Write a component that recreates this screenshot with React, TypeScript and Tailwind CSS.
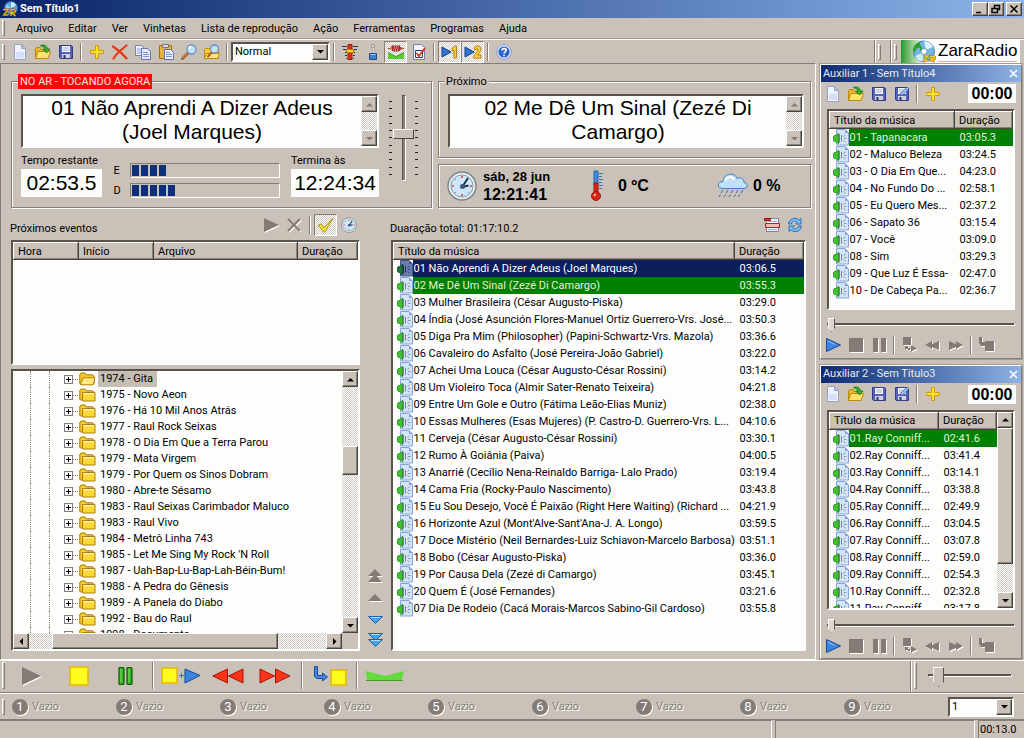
import React from "react";

type Track = { title: string; time: string };

const t = (title: string, time: string): Track => ({ title, time });

const PLAYLIST: Track[] = [
  t("01 Não Aprendi A Dizer Adeus (Joel Marques)", "03:06.5"),
  t("02 Me Dê Um Sinal (Zezé Di Camargo)", "03:55.3"),
  t("03 Mulher Brasileira (César Augusto-Piska)", "03:29.0"),
  t("04 Índia (José Asunción Flores-Manuel Ortiz Guerrero-Vrs. José...", "03:50.3"),
  t("05 Diga Pra Mim (Philosopher) (Papini-Schwartz-Vrs. Mazola)", "03:36.6"),
  t("06 Cavaleiro do Asfalto (José Pereira-João Gabriel)", "03:22.0"),
  t("07 Achei Uma Louca (César Augusto-César Rossini)", "03:14.2"),
  t("08 Um Violeiro Toca (Almir Sater-Renato Teixeira)", "04:21.8"),
  t("09 Entre Um Gole e Outro (Fátima Leão-Elias Muniz)", "02:38.0"),
  t("10 Essas Mulheres (Esas Mujeres) (P. Castro-D. Guerrero-Vrs. L...", "04:10.6"),
  t("11 Cerveja (César Augusto-César Rossini)", "03:30.1"),
  t("12 Rumo À Goiânia (Paiva)", "04:00.5"),
  t("13 Anarriê (Cecílio Nena-Reinaldo Barriga- Lalo Prado)", "03:19.4"),
  t("14 Cama Fria (Rocky-Paulo Nascimento)", "03:43.8"),
  t("15 Eu Sou Desejo, Você É Paixão (Right Here Waiting) (Richard ...", "04:21.9"),
  t("16 Horizonte Azul (Mont'Alve-Sant'Ana-J. A. Longo)", "03:59.5"),
  t("17 Doce Mistério (Neil Bernardes-Luiz Schiavon-Marcelo Barbosa)", "03:51.1"),
  t("18 Bobo (César Augusto-Piska)", "03:36.0"),
  t("19 Por Causa Dela (Zezé di Camargo)", "03:45.1"),
  t("20 Quem É (José Fernandes)", "03:21.6"),
  t("07 Dia De Rodeio (Cacá Morais-Marcos Sabino-Gil Cardoso)", "03:55.8"),
];

const AUX1: Track[] = [
  t("01 - Tapanacara", "03:05.3"),
  t("02 - Maluco Beleza", "03:24.5"),
  t("03 - O Dia Em Que...", "04:23.0"),
  t("04 - No Fundo Do ...", "02:58.1"),
  t("05 - Eu Quero Mes...", "02:37.2"),
  t("06 - Sapato 36", "03:15.4"),
  t("07 - Você", "03:09.0"),
  t("08 - Sim", "03:29.3"),
  t("09 - Que Luz É Essa-", "02:47.0"),
  t("10 - De Cabeça Pa...", "02:36.7"),
];

const AUX2: Track[] = [
  t("01.Ray Conniff...", "02:41.6"),
  t("02.Ray Conniff...", "03:41.4"),
  t("03.Ray Conniff...", "03:14.1"),
  t("04.Ray Conniff...", "03:38.8"),
  t("05.Ray Conniff...", "02:49.9"),
  t("06.Ray Conniff...", "03:04.5"),
  t("07.Ray Conniff...", "03:07.8"),
  t("08.Ray Conniff...", "02:59.0"),
  t("09.Ray Conniff...", "02:54.3"),
  t("10.Ray Conniff...", "02:32.8"),
  t("11.Ray Conniff...", "03:17.8"),
];

const FOLDERS = [
  "1974 - Gita",
  "1975 - Novo Aeon",
  "1976 - Há 10 Mil Anos Atrás",
  "1977 - Raul Rock Seixas",
  "1978 - O Dia Em Que a Terra Parou",
  "1979 - Mata Virgem",
  "1979 - Por Quem os Sinos Dobram",
  "1980 - Abre-te Sésamo",
  "1983 - Raul Seixas Carimbador Maluco",
  "1983 - Raul Vivo",
  "1984 - Metrô Linha 743",
  "1985 - Let Me Sing My Rock 'N Roll",
  "1987 - Uah-Bap-Lu-Bap-Lah-Béin-Bum!",
  "1988 - A Pedra do Gênesis",
  "1989 - A Panela do Diabo",
  "1992 - Bau do Raul",
  "1998 - Documento",
];

const MENUS = ["Arquivo", "Editar", "Ver", "Vinhetas", "Lista de reprodução", "Ação", "Ferramentas", "Programas", "Ajuda"];

const SUNKEN =
  "border-2 border-t-[#5a534c] border-l-[#5a534c] border-r-white border-b-white bg-[#fdfdfc]";
const RAISED =
  "border border-t-white border-l-white border-r-[#4a443e] border-b-[#4a443e] bg-[#cac2b9] shadow-[inset_-1px_-1px_0_#8a8279]";
const ETCHED = "border border-[#857d75] shadow-[1px_1px_0_#fff,inset_1px_1px_0_#fff]";
const DITHER = "bg-[repeating-conic-gradient(#fff_0_25%,#cfc8c0_0_50%)] bg-[length:2px_2px]";

/* ---------- icons ---------- */

type IconProps = { children: React.ReactNode; w?: number; h?: number };
const Svg = ({ children, w = 16, h = 16 }: IconProps) => (
  <svg width={w} height={h} viewBox={`0 0 ${w} ${h}`} className="block shrink-0" aria-hidden="true">
    {children}
  </svg>
);

const NewIcon = () => (
  <Svg>
    <path d="M2.5.5h7l4 4v11h-11z" fill="#eef3ff" stroke="#94a2cc" />
    <path d="M4 8h8v6H4z" fill="#d5e0f8" />
    <path d="M9.5.5v4h4z" fill="#b4c3ea" stroke="#94a2cc" />
  </Svg>
);

const OpenIcon = () => (
  <Svg>
    <path d="M.5 14.5v-10l1-1h4l1 2h6v3" fill="#e8b62c" stroke="#b88710" />
    <path d="M.5 14.5l2.500-7h12.500l-2.500 7z" fill="#ffe36b" stroke="#bd8b10" />
    <path d="M5.500 1.500c4-1.500 6.500.5 7 3.500h2.500L11.500 9 8 5.500h2c-.5-2-2-3-4.500-4z" fill="#3bb02a" stroke="#14720f" strokeWidth=".8" />
  </Svg>
);

const SaveIcon = ({ edit = false }: { edit?: boolean }) => (
  <Svg>
    <path d="M1.500 1.500h12l1 1v12h-12l-1-1z" fill="#5661b8" stroke="#343b86" />
    <path d="M4 2h8v6H4z" fill="#f4f4fb" />
    <path d="M5 4h6M5 6h6" stroke="#a9aed6" />
    <path d="M4 10h8v4H4z" fill="#cfd1e0" />
    <path d="M5.500 11h2v3h-2z" fill="#2c3170" />
    {edit && <path d="M6 9.500l1-2.500 6-6 1.800 1.800-6 6z" fill="#9fc4f2" stroke="#3c62a8" strokeWidth=".8" />}
  </Svg>
);

const PlusIcon = () => (
  <Svg>
    <path d="M6.500 1.500h3v5h5v3h-5v5h-3v-5h-5v-3h5z" fill="#ffe32a" stroke="#d19a08" />
  </Svg>
);

const DeleteIcon = () => (
  <Svg>
    <path d="M1 2.500C5 5 11 10 14.500 14.500M14.500 1.500C10 5 4 10 1.500 14.500" stroke="#e5391c" strokeWidth="2.200" fill="none" strokeLinecap="round" />
  </Svg>
);

const CopyIcon = () => (
  <Svg>
    <path d="M.5 1.500h6l2.500 2.500v7.500h-8.500z" fill="#eef2ff" stroke="#7480b8" />
    <path d="M2 5h5M2 7h5M2 9h4" stroke="#8fa0d8" />
    <path d="M6.500 4.500h6l3 3v8h-9z" fill="#e4ebff" stroke="#6673b0" />
    <path d="M8 8.500h5M8 10.500h6M8 12.500h6" stroke="#7d90d0" />
  </Svg>
);

const PasteIcon = () => (
  <Svg>
    <path d="M1.500 1.500h12v13h-12z" fill="#e5b43a" stroke="#9c7014" />
    <path d="M4.500.5h6v3h-6z" fill="#d8d8dd" stroke="#77777d" />
    <path d="M6.500 5.500h6l3 3v7h-9z" fill="#eef2ff" stroke="#6673b0" />
    <path d="M8 8.500h4M8 10.500h6M8 12.500h6" stroke="#7d90d0" />
  </Svg>
);

const SearchIcon = () => (
  <Svg>
    <path d="M1.500 14.500l5-5" stroke="#a85c24" strokeWidth="3" strokeLinecap="round" />
    <path d="M1.500 14l4.500-4.500" stroke="#e49b5a" strokeWidth="1" />
    <circle cx="10.500" cy="5.500" r="4.500" fill="#c3e4fb" stroke="#6b8fc0" strokeWidth="1.300" />
    <path d="M8 5a2.500 2.500 0 012.500-2.500" stroke="#fff" strokeWidth="1.300" fill="none" />
  </Svg>
);

const SearchFolderIcon = () => (
  <Svg>
    <path d="M.5 14.500v-9l1-1h4l1 1.500h8v8.500z" fill="#f6cc3e" stroke="#bd8b10" />
    <path d="M.5 14.500l2-5h13l-1.500 5z" fill="#ffe577" stroke="#bd8b10" />
    <path d="M4 12.500l3.500-4" stroke="#a85c24" strokeWidth="2" strokeLinecap="round" />
    <circle cx="10.500" cy="5" r="4" fill="#c3e4fb" stroke="#6b8fc0" strokeWidth="1.300" />
  </Svg>
);

const MixerIcon = () => (
  <Svg>
    <path d="M0 2.500h5M11 2.500h5M1 5.500h4M11 5.500h4M3 8.500h2M11 8.500h2M3 11.500h2M11 11.500h2M4 14.500h1M11 14.500h1" stroke="#333" />
    <path d="M6 .5h4v15H6z" fill="#d8341c" stroke="#8c1c08" />
    <path d="M4.500 5.500h7v3h-7z" fill="#ffd23a" stroke="#b87e08" />
  </Svg>
);

const MicIcon = () => (
  <Svg>
    <rect x="6.500" y=".5" width="3" height="3" rx="1" fill="#d8d8d8" stroke="#888" />
    <path d="M7.500 3.500h1.500v6H7.500z" fill="#f4f4f4" stroke="#999" strokeWidth=".7" />
    <path d="M4.500 9.500h7v6h-7z" fill="#3f7fd0" stroke="#1e4c92" />
    <path d="M5.500 10.500h5" stroke="#a4cdf8" />
  </Svg>
);

const FadeIcon = () => (
  <Svg w={18} h={16}>
    <path d="M1 4.500h2M15 4.500h2M4 6V3l1.500-1.500V7L7 1.500v6L9 1.500v6l2-6v6l1.500-6V7L14 3v3" stroke="#a8201a" strokeWidth=".9" fill="none" />
    <path d="M1 8.500l8 4 8-4V15H1z" fill="#56cc35" />
    <path d="M1 8.500l8 4 8-4" stroke="#3da022" fill="none" />
  </Svg>
);

const CheckDocIcon = () => (
  <Svg>
    <path d="M2.500.5h8l3 3v12h-11z" fill="#f2f5ff" stroke="#7480b8" />
    <path d="M4.500 6.500h7v7h-7z" fill="#fff" stroke="#333a70" />
    <path d="M5.500 9l2.500 3 6-8" stroke="#e02c1c" strokeWidth="1.800" fill="none" />
  </Svg>
);

const PlayNumIcon = ({ n }: { n: 1 | 2 }) => (
  <Svg w={18} h={16}>
    <path d="M1 3l9 5-9 5z" fill="#2e78d2" stroke="#123f88" />
    {n === 1 ? (
      <path d="M11 4.500l3-2.500h1.500v12h-2.500V6l-2 1z" fill="#ffd036" stroke="#b07c04" strokeWidth=".9" />
    ) : (
      <path d="M10 5.500C10 .5 17 .8 17 5c0 2.500-2.500 4-3.500 6H17v3h-7.500c0-4 4.500-6 4.500-8.500 0-1.300-1.600-1.300-1.600 0z" fill="#ffd036" stroke="#b07c04" strokeWidth=".9" />
    )}
  </Svg>
);

const HelpIcon = () => (
  <Svg>
    <circle cx="8" cy="8" r="7.300" fill="#dfe8fb" stroke="#8b9bd8" />
    <circle cx="8" cy="8" r="5.600" fill="#2e63cf" />
    <path d="M6 6.500C6 4 10.200 4 10.200 6.300 10.200 7.800 8 7.800 8 9.500M8 10.700v1.500" stroke="#fff" strokeWidth="1.600" fill="none" />
  </Svg>
);

const TrackIcon = ({ dark = false }: { dark?: boolean }) => (
  <Svg w={16} h={17}>
    <path d="M3.500.5h8.500l3.500 3.500v12h-12z" fill={dark ? "#6a7fb0" : "#d3e3f8"} stroke={dark ? "#3f5288" : "#88a4d4"} />
    <path d="M12 .5v3.500h3.500z" fill={dark ? "#3f5288" : "#7fa0d8"} />
    <path d="M10.500 7.500l2-1.500M11 9.500h2.500M10.500 11.500l2 1.500" stroke={dark ? "#2c3c6c" : "#8393a8"} />
    <path d="M6.500 5v8.500M8.500 6v6.500" stroke={dark ? "#203050" : "#77858c"} />
    <path d="M.5 7.500l1-1h1.500l2-2h.5v10H5l-2-2H1.500l-1-1z" fill={dark ? "#1f7038" : "#3fc22c"} stroke={dark ? "#0e4424" : "#1c8414"} strokeWidth=".8" />
  </Svg>
);

const FolderIcon = ({ open = false }: { open?: boolean }) => (
  <Svg w={17} h={14}>
    <path d="M.8 11.500V2.500L2 1h4l1.300 1.800h6.200L15 4v8H2z" fill="#f3c92e" stroke="#a97a0a" />
    {open ? (
      <path d="M1.500 12.800l2.500-7h12l-2 7z" fill="#ffec80" stroke="#b1820e" />
    ) : (
      <>
        <path d="M3.500 4.500h12.500v8.500H3.500z" fill="#ffd838" stroke="#b1820e" />
        <path d="M4.500 5.800h10.500" stroke="#fff3a6" strokeWidth="1.400" />
      </>
    )}
  </Svg>
);

const ClockIcon = ({ size = 16 }: { size?: number }) => (
  <svg width={size} height={size} viewBox="0 0 30 30" className="block shrink-0" aria-hidden="true">
    <circle cx="15" cy="15" r="14" fill="#e9edf0" stroke="#7d8890" strokeWidth="1.500" />
    <circle cx="15" cy="15" r="11" fill="#cde6fa" stroke="#8a9aaa" />
    <path d="M15 5v2M15 23v2M5 15h2M23 15h2" stroke="#d04428" strokeWidth="1.600" />
    <path d="M8 8l1 1M22 22l-1-1M8 22l1-1" stroke="#6a7c90" />
    <path d="M15.500 15.500L21 7M15.500 16l6-1.500" stroke="#1f3350" strokeWidth="2" />
    <circle cx="15.500" cy="15.500" r="2.500" fill="#35557c" />
  </svg>
);

const ThermoIcon = () => (
  <Svg w={13} h={32}>
    <path d="M3 1h4v14H3z" fill="#3c8edc" stroke="#2266b0" />
    <path d="M3 13h4v9H3z" fill="#d9281a" stroke="#a01408" />
    <circle cx="5" cy="26" r="4.500" fill="#d9281a" stroke="#a01408" />
    <circle cx="3.800" cy="25" r="1.200" fill="#ffb0a0" />
    <path d="M8 3.500h4M8 6.500h3M8 9.500h4M8 12.500h3M8 15.500h4M8 18.500h3" stroke="#3c78b4" />
  </Svg>
);

const RainIcon = () => (
  <Svg w={32} h={26}>
    <path d="M6 15.500C-.5 15.500 0 8.500 6 8.500 7-.5 18-1 20 5.500c4-2 7 0 7 4 4.500.5 4 6 0 6z" fill="#bfe0f8" stroke="#3f7fc4" />
    <path d="M8 8c2-5 8-5 9-1" stroke="#fff" strokeWidth="2" fill="none" />
    <path d="M6 17l-2 3M11 17l-2 3M16 17l-2 3M21 17l-2 3M26 17l-2 3M3.500 21.500l-1.500 2.500M8.500 21.500l-1.500 2.500M13.500 21.500l-1.500 2.500M18.500 21.500l-1.500 2.500M23 21.500l-1.500 2.500" stroke="#3a66b0" />
  </Svg>
);

const ReportIcon = () => (
  <Svg>
    <path d="M2.500 1.500h12v13h-12z" fill="#f0f2fc" stroke="#7a80b4" />
    <path d="M4 12.500h9M4 4.500h9" stroke="#a7b0dc" />
    <path d="M.5 1.500h6v2h-6z" fill="#e04436" stroke="#8c1410" />
    <path d="M1.500 6.500h14v4h-14z" fill="#f6b8b0" stroke="#b4201a" />
  </Svg>
);

const RefreshIcon = () => (
  <Svg>
    <path d="M1.500 7C2 1.500 8.500-.5 12 3.200l2-1.700v5.500H8.500l1.800-1.800C8 3 5 4 4.500 7z" fill="#7cc0f2" stroke="#1f68b4" strokeWidth=".9" />
    <path d="M14.500 9C14 14.500 7.500 16.500 4 12.800l-2 1.700V9h5.500l-1.800 1.800C8 13 11 12 11.500 9z" fill="#7cc0f2" stroke="#1f68b4" strokeWidth=".9" />
  </Svg>
);

const CheckIcon = () => (
  <Svg w={18} h={16}>
    <path d="M1.500 8l2.500-1 3 4L16 1l-8 14H6.500z" fill="#ffe636" stroke="#b09208" />
  </Svg>
);

const Etched = ({ d, w = 16, h = 16 }: { d: string; w?: number; h?: number }) => (
  <Svg w={w} h={h}>
    <path d={d} fill="#fff" transform="translate(1 1)" />
    <path d={d} fill="#857b76" />
  </Svg>
);

const GrayCross = () => (
  <Svg>
    <path d="M2 3l12 12M14 3L2 15" stroke="#fff" strokeWidth="2" />
    <path d="M1 2l12 12M13 2L1 14" stroke="#857b76" strokeWidth="2" />
  </Svg>
);

const AppIcon = () => (
  <Svg>
    <circle cx="9" cy="7" r="6.500" fill="#5aa6e2" stroke="#2b68ac" />
    <path d="M9 1a6 6 0 015 3L9 7z" fill="#d4f0ff" />
    <path d="M9 7L4 3v7z" fill="#8fd0f8" />
    <path d="M1 8.500h5l-4 5.500h4.500M9 15V8.500h3c2 0 2 3 0 3H9.500l4 3.500" stroke="#7a5a08" strokeWidth="2.200" fill="none" />
    <path d="M1 8.500h5l-4 5.500h4.500M9 15V8.500h3c2 0 2 3 0 3H9.500l4 3.500" stroke="#e2b83c" strokeWidth="1.200" fill="none" />
  </Svg>
);

/* ---------- small controls ---------- */

const Sep = () => (
  <span className="mx-[3px] h-[18px] w-0.5 shrink-0 border-l border-r border-l-[#857d75] border-r-white" />
);

const Grip = () => (
  <span className="h-[16px] w-[3px] shrink-0 border border-t-white border-l-white border-r-[#857d75] border-b-[#857d75]" />
);

const ToolButton = ({ label, children, pressed = false }: { label: string; children: React.ReactNode; pressed?: boolean }) => (
  <button
    type="button"
    aria-label={label}
    className={
      pressed
        ? `flex h-[22px] w-[23px] shrink-0 items-center justify-center border border-t-[#857d75] border-l-[#857d75] border-r-white border-b-white ${DITHER}`
        : "flex h-[22px] w-[23px] shrink-0 items-center justify-center"
    }
  >
    {children}
  </button>
);

const Arrow = ({ dir, gray = false }: { dir: "up" | "down" | "left" | "right"; gray?: boolean }) => {
  const d = {
    up: "M0 5.500L3.500 2 7 5.500z",
    down: "M0 2h7L3.500 5.500z",
    left: "M5 0v7L1.500 3.500z",
    right: "M2 0v7l3.500-3.500z",
  }[dir];
  return (
    <Svg w={7} h={7}>
      <path d={d} fill={gray ? "#857b76" : "#000"} />
    </Svg>
  );
};

const ScrollButton = ({ dir, gray }: { dir: "up" | "down" | "left" | "right"; gray?: boolean }) => (
  <button type="button" aria-label={`Rolar ${dir}`} className={`flex h-4 w-4 shrink-0 items-center justify-center ${RAISED}`}>
    <Arrow dir={dir} gray={gray} />
  </button>
);

const DropDown = ({ label, options, className }: { label: string; options: string[]; className: string }) => (
  <span className={`relative flex h-5 ${SUNKEN} ${className}`}>
    <select aria-label={label} className="w-full appearance-none bg-transparent pl-0.5 text-[11px] leading-4 outline-none">
      {options.map((o) => (
        <option key={o}>{o}</option>
      ))}
    </select>
    <span className={`pointer-events-none absolute top-0 right-0 flex h-4 w-4 items-center justify-center ${RAISED}`}>
      <Arrow dir="down" />
    </span>
  </span>
);

const TrackTable = ({ tracks, timeCol, selected = -1, next }: { tracks: Track[]; timeCol: string; selected?: number; next: number }) => (
  <table className="w-full table-fixed border-collapse">
    <colgroup>
      <col />
      <col className={timeCol} />
    </colgroup>
    <thead>
      <tr className="h-[17px]">
        <th className={`p-0 text-left font-normal ${RAISED}`}>
          <div className="h-[15px] pl-1 leading-[15px]">Título da música</div>
        </th>
        <th className={`p-0 text-left font-normal ${RAISED}`}>
          <div className="h-[15px] pl-1 leading-[15px]">Duração</div>
        </th>
      </tr>
    </thead>
    <tbody>
      {tracks.map((row, i) => {
        const tone = i === selected ? "bg-[#0a1f5c] text-white" : i === next ? "bg-[#008000] text-[#e2f4dc]" : "";
        return (
          <tr key={row.title} className="h-[17px]">
            <td className="p-0">
              <div className="flex h-[17px] pl-[3px]">
                <TrackIcon dark={i === selected} />
                <span className={`min-w-0 flex-1 pl-px leading-[17px] whitespace-nowrap ${tone}`}>{row.title}</span>
              </div>
            </td>
            <td className={`p-0 pl-[5px] leading-[17px] whitespace-nowrap ${tone}`}>{row.time}</td>
          </tr>
        );
      })}
    </tbody>
  </table>
);

/* ---------- panels ---------- */

const BigTitle = ({ text }: { text: string }) => (
  <div className={`flex h-[54px] ${SUNKEN}`}>
    <p className="flex-1 px-5 text-center font-['Liberation_Sans',sans-serif] text-[21px] leading-6">{text}</p>
    <div className={`flex w-4 flex-col justify-between ${DITHER}`}>
      <ScrollButton dir="up" gray />
      <ScrollButton dir="down" gray />
    </div>
  </div>
);

const Meter = ({ label, bars }: { label: string; bars: number }) => (
  <div className="flex items-center">
    <span className="w-4">{label}</span>
    <div className="flex h-[15px] flex-1 items-center gap-0.5 border border-t-[#857d75] border-l-[#857d75] border-r-white border-b-white pl-px">
      {Array.from({ length: bars }, (_, i) => (
        <span key={i} className="h-[11px] w-[7px] bg-[#0e2f7c]" />
      ))}
    </div>
  </div>
);

const Ticks = () => (
  <div className="flex h-[74px] w-[3px] flex-col justify-between">
    {Array.from({ length: 11 }, (_, i) => (
      <span key={i} className="h-px bg-[#222]" />
    ))}
  </div>
);

const OnAir = () => (
  <fieldset className={`flex w-[421px] shrink-0 gap-[10px] pr-[13px] pb-2 pl-[9px] ${ETCHED}`}>
    <legend className="-ml-[3px] bg-[#fb0505] px-0.5 text-[11px] leading-[15px] text-[#ffe4e0]">NO AR - TOCANDO AGORA</legend>
    <div className="mt-[5px] flex flex-1 flex-col gap-1">
      <BigTitle text="01 Não Aprendi A Dizer Adeus (Joel Marques)" />
      <div className="flex justify-between">
        <div>
          <p className="leading-[17px]">Tempo restante</p>
          <p className="w-[81px] bg-[#fdfdfc] text-center font-['Liberation_Sans',sans-serif] text-[21px] leading-7">02:53.5</p>
        </div>
        <div className="flex w-[166px] flex-col gap-[5px] pt-[11px]">
          <Meter label="E" bars={4} />
          <Meter label="D" bars={5} />
        </div>
        <div>
          <p className="leading-[17px]">Termina às</p>
          <p className="w-[88px] bg-[#fdfdfc] text-center font-['Liberation_Sans',sans-serif] text-[21px] leading-7">12:24:34</p>
        </div>
      </div>
    </div>
    <div className="mt-[6px] flex h-[86px] items-center">
      <Ticks />
      <input
        type="range"
        aria-label="Volume"
        defaultValue={56}
        className="h-[86px] w-[23px] appearance-none bg-transparent [direction:rtl] [writing-mode:vertical-lr] [&::-webkit-slider-runnable-track]:mx-auto [&::-webkit-slider-runnable-track]:h-full [&::-webkit-slider-runnable-track]:w-1 [&::-webkit-slider-runnable-track]:border [&::-webkit-slider-runnable-track]:border-t-[#5a534c] [&::-webkit-slider-runnable-track]:border-r-white [&::-webkit-slider-runnable-track]:border-b-white [&::-webkit-slider-runnable-track]:border-l-[#5a534c] [&::-webkit-slider-runnable-track]:bg-[#8a8279] [&::-webkit-slider-thumb]:-ml-[10px] [&::-webkit-slider-thumb]:h-[10px] [&::-webkit-slider-thumb]:w-[21px] [&::-webkit-slider-thumb]:appearance-none [&::-webkit-slider-thumb]:border [&::-webkit-slider-thumb]:border-t-white [&::-webkit-slider-thumb]:border-r-[#4a443e] [&::-webkit-slider-thumb]:border-b-[#4a443e] [&::-webkit-slider-thumb]:border-l-white [&::-webkit-slider-thumb]:bg-[#cac2b9]"
      />
      <Ticks />
    </div>
  </fieldset>
);

const Upcoming = () => (
  <div className="flex min-w-0 flex-1 flex-col justify-between">
    <fieldset className={`min-w-0 pr-[6px] pb-[9px] pl-[9px] ${ETCHED}`}>
      <legend className="-ml-1 bg-[#cac2b9] px-0.5 leading-[15px]">Próximo</legend>
      <div className="mt-[5px]">
        <BigTitle text="02 Me Dê Um Sinal (Zezé Di Camargo)" />
      </div>
    </fieldset>
    <div className={`flex h-11 items-center pl-2 font-['Liberation_Sans',sans-serif] font-bold ${ETCHED}`}>
      <ClockIcon size={30} />
      <div className="w-[114px] pl-[6px]">
        <p className="text-[13px] leading-[18px]">sáb, 28 jun</p>
        <p className="text-[16px] leading-[18px]">12:21:41</p>
      </div>
      <div className="flex w-[126px] items-center gap-3.5">
        <ThermoIcon />
        <p className="text-[16px]">0 ºC</p>
      </div>
      <RainIcon />
      <p className="pl-1 text-[16px]">0 %</p>
    </div>
  </div>
);

const Events = () => (
  <section className="flex flex-col">
    <div className="flex h-[30px] items-center justify-between">
      <h2 className="-ml-px pt-2">Próximos eventos</h2>
      <div className="flex items-center">
        <ToolButton label="Executar evento"><Etched d="M0 1l15 7-15 7z" /></ToolButton>
        <ToolButton label="Excluir evento"><GrayCross /></ToolButton>
        <Sep />
        <ToolButton label="Eventos ativos" pressed><CheckIcon /></ToolButton>
        <ToolButton label="Agenda"><ClockIcon /></ToolButton>
      </div>
    </div>
    <div className={`h-[125px] ${SUNKEN}`}>
      <table className="w-full table-fixed border-collapse">
        <colgroup>
          <col className="w-[65px]" />
          <col className="w-[75px]" />
          <col />
          <col className="w-[60px]" />
        </colgroup>
        <thead>
          <tr className="h-[17px]">
            {["Hora", "Início", "Arquivo", "Duração"].map((h) => (
              <th key={h} className={`p-0 text-left font-normal ${RAISED}`}>
                <div className="h-[15px] pl-1 leading-[15px]">{h}</div>
              </th>
            ))}
          </tr>
        </thead>
      </table>
    </div>
  </section>
);

const FolderTree = () => (
  <section aria-label="Pastas" className={`mt-1 flex min-h-0 flex-1 flex-col ${SUNKEN}`}>
    <div className="flex min-h-0 flex-1">
      <ul className="min-h-0 flex-1 overflow-hidden">
        {FOLDERS.map((name, i) => (
          <li key={name} className="flex h-4 items-center">
            <span className="ml-[17px] h-4 w-[19px] border-l border-dotted border-[#8b8780]" />
            <span className="h-4 w-[15px] border-l border-dotted border-[#8b8780]" />
            <button
              type="button"
              aria-label={`Expandir ${name}`}
              className="flex h-[9px] w-[9px] shrink-0 items-center justify-center border border-[#857d75] bg-white"
            >
              <Svg w={5} h={5}>
                <path d="M0 2.500h5M2.500 0v5" stroke="#000" />
              </Svg>
            </button>
            <span className="mr-px w-[5px] border-t border-dotted border-[#8b8780]" />
            <FolderIcon open={i === 0} />
            <span className={`ml-0.5 h-4 px-0.5 leading-4 whitespace-nowrap ${i === 0 ? "bg-[#c6beb4] pr-1" : ""}`}>{name}</span>
          </li>
        ))}
      </ul>
      <div className={`flex w-4 flex-col ${DITHER}`}>
        <ScrollButton dir="up" />
        <div className="flex-[59]" />
        <div className={`h-[29px] ${RAISED}`} />
        <div className="flex-[142]" />
        <ScrollButton dir="down" />
      </div>
    </div>
    <div className="flex h-4 bg-[#cac2b9]">
      <div className={`flex flex-1 ${DITHER}`}>
        <ScrollButton dir="left" />
        <div className="flex-[23]" />
        <div className={`flex-[227] ${RAISED}`} />
        <div className="flex-[49]" />
        <ScrollButton dir="right" />
      </div>
      <div className="w-4" />
    </div>
  </section>
);

const MoveButtons = () => (
  <div className="flex w-[31px] shrink-0 flex-col items-center justify-end gap-1 pb-0.5">
    <button type="button" aria-label="Mover para o início">
      <Etched w={17} h={17} d="M8 0l7 7H1zM8 5l7 8H1z" />
    </button>
    <button type="button" aria-label="Mover para cima">
      <Etched w={17} h={17} d="M8 4l7 7H1z" />
    </button>
    <button type="button" aria-label="Mover para baixo">
      <Svg w={17} h={17}>
        <path d="M1.500 5.500h14l-7 7z" fill="#46a0f0" stroke="#1c62b4" />
        <path d="M4 6.500h9" stroke="#b4defc" />
      </Svg>
    </button>
    <button type="button" aria-label="Mover para o fim">
      <Svg w={17} h={17}>
        <path d="M1.500 1.500h14l-7 7z" fill="#46a0f0" stroke="#1c62b4" />
        <path d="M1.500 7.500h14l-7 7z" fill="#46a0f0" stroke="#1c62b4" />
        <path d="M4 2.500h9M4 8.500h9" stroke="#b4defc" />
      </Svg>
    </button>
  </div>
);

const H_SLIDER =
  "appearance-none bg-transparent [&::-webkit-slider-runnable-track]:h-[3px] [&::-webkit-slider-runnable-track]:border [&::-webkit-slider-runnable-track]:border-t-[#5a534c] [&::-webkit-slider-runnable-track]:border-l-[#5a534c] [&::-webkit-slider-runnable-track]:border-r-white [&::-webkit-slider-runnable-track]:border-b-white [&::-webkit-slider-runnable-track]:bg-[#5a534c] [&::-webkit-slider-thumb]:appearance-none";

const Auxiliary = ({ title, tracks, timeCol, scroll = false }: { title: string; tracks: Track[]; timeCol: string; scroll?: boolean }) => (
  <section className="flex min-h-0 flex-1 flex-col border border-t-white border-l-white border-r-[#857d75] border-b-[#857d75] outline outline-[#a49c93]">
    <header className="flex h-[17px] items-center justify-between bg-linear-to-r from-[#0e2a70] to-[#8fb2e4] pr-[3px] pl-0.5 text-[#e6ecf8]">
      <h2>{title}</h2>
      <button type="button" aria-label={`Fechar ${title}`}>
        <Svg w={9} h={9}>
          <path d="M1 1l7 7M8 1L1 8" stroke="#fff" strokeWidth="1.500" />
        </Svg>
      </button>
    </header>
    <div className="flex h-[25px] items-center justify-between pr-[5px] pb-0.5">
      <div className="flex items-center">
        <ToolButton label="Novo"><NewIcon /></ToolButton>
        <ToolButton label="Abrir"><OpenIcon /></ToolButton>
        <ToolButton label="Salvar"><SaveIcon /></ToolButton>
        <ToolButton label="Salvar como"><SaveIcon edit /></ToolButton>
        <Sep />
        <ToolButton label="Adicionar"><PlusIcon /></ToolButton>
      </div>
      <p className="w-12 bg-[#fdfdfc] text-center font-['Liberation_Sans',sans-serif] text-[16px] leading-[19px] font-bold">00:00</p>
    </div>
    <div className={`mx-1.5 mt-0.5 flex min-h-0 flex-1 overflow-hidden ${SUNKEN}`}>
      <div className="min-w-0 flex-1 overflow-hidden">
        <TrackTable tracks={tracks} timeCol={timeCol} next={0} />
      </div>
      {scroll && (
        <div className={`flex w-4 flex-col ${DITHER}`}>
          <ScrollButton dir="up" />
          <div className={`flex-[137] ${RAISED}`} />
          <div className="flex-[28]" />
          <ScrollButton dir="down" />
        </div>
      )}
    </div>
    <input
      type="range"
      aria-label={`Posição ${title}`}
      defaultValue={0}
      className={`mx-1.5 mt-[7px] h-4 ${H_SLIDER} [&::-webkit-slider-thumb]:-mt-[6px] [&::-webkit-slider-thumb]:h-[14px] [&::-webkit-slider-thumb]:w-[7px] [&::-webkit-slider-thumb]:border [&::-webkit-slider-thumb]:border-t-white [&::-webkit-slider-thumb]:border-l-white [&::-webkit-slider-thumb]:border-r-[#5a534c] [&::-webkit-slider-thumb]:border-b-[#5a534c] [&::-webkit-slider-thumb]:bg-[#dcd6cf] [&::-webkit-slider-thumb]:[clip-path:polygon(0_0,100%_0,100%_72%,50%_100%,0_72%)]`}
    />
    <div className="flex h-[25px] items-center">
      <ToolButton label="Tocar">
        <Svg>
          <path d="M1.500 1.500l14 6.500-14 6.500z" fill="#3b85e0" stroke="#174a98" />
          <path d="M3 4l7 3.500" stroke="#9cc8fa" />
        </Svg>
      </ToolButton>
      <ToolButton label="Parar"><Etched d="M1 1h14v14H1z" /></ToolButton>
      <ToolButton label="Pausar"><Etched d="M2 1h5v14H2zM10 1h5v14h-5z" /></ToolButton>
      <Sep />
      <ToolButton label="Parar e tocar"><Etched d="M1 0h8v8H1zM3 9h3v2h2v2H6v-1H3zM9 8l6 3.500-6 3z" /></ToolButton>
      <ToolButton label="Anterior"><Etched d="M0 8l7-4v3l7-3v9l-7-3v2z" /></ToolButton>
      <ToolButton label="Próxima"><Etched d="M15 8L8 4v3L1 4v9l7-3v2z" /></ToolButton>
      <Sep />
      <ToolButton label="Ir para"><Etched d="M0 0h3v5h3v-1h9v10H6V9H2L0 6z" /></ToolButton>
    </div>
  </section>
);

const BarButton = ({ label, children }: { label: string; children: React.ReactNode }) => (
  <button type="button" aria-label={label} className="flex h-[30px] w-[47px] shrink-0 items-center justify-center">
    {children}
  </button>
);

const Transport = () => (
  <div className="flex h-[33px] shrink-0 items-stretch border-t border-b border-t-white border-b-[#857d75]">
    <div className="flex flex-1 items-center border-r border-[#857d75] pb-0.5 pl-0.5 [&>span]:h-[27px]">
      <Grip />
      <div className="ml-[3px] flex items-center [&>span]:h-[27px]">
        <BarButton label="Tocar"><Etched w={22} h={20} d="M1 1l19 9-19 9z" /></BarButton>
        <BarButton label="Parar">
          <Svg w={20} h={20}><path d="M1 1h18v18H1z" fill="#fffb1e" stroke="#e4b800" strokeWidth="1.500" /></Svg>
        </BarButton>
        <BarButton label="Pausar">
          <Svg w={16} h={20}>
            <rect x="1" y="1.500" width="5" height="17" rx="1" fill="#2fae1e" stroke="#0d5c08" strokeWidth="1.200" />
            <rect x="9" y="1.500" width="5" height="17" rx="1" fill="#2fae1e" stroke="#0d5c08" strokeWidth="1.200" />
            <path d="M3 3v13M11 3v13" stroke="#8be070" />
          </Svg>
        </BarButton>
        <Sep />
        <BarButton label="Parar e tocar próxima">
          <Svg w={40} h={20}>
            <path d="M1 2h15v15H1z" fill="#fffb1e" stroke="#e4b800" strokeWidth="1.500" />
            <path d="M18 9.500h5M20.500 7v5" stroke="#3670c8" />
            <path d="M24 3l15 6.500L24 17z" fill="#3b85e0" stroke="#174a98" />
          </Svg>
        </BarButton>
        <BarButton label="Anterior">
          <Svg w={32} h={20}>
            <path d="M15.500 3v14L.8 10zM31 3v14L16.500 10z" fill="#fb3318" stroke="#a81404" />
          </Svg>
        </BarButton>
        <BarButton label="Próxima">
          <Svg w={32} h={20}>
            <path d="M1 3v14L15.500 10zM16.500 3v14L31 10z" fill="#fb3318" stroke="#a81404" />
          </Svg>
        </BarButton>
        <Sep />
        <BarButton label="Avançar ao parar">
          <Svg w={34} h={20}>
            <path d="M1.500.5h3v9h5V7l5 4-5 4v-2.500h-6l-2-2z" fill="#4484dc" stroke="#1b4c9c" />
            <path d="M18 4h15v15H18z" fill="#fffb1e" stroke="#e4b800" strokeWidth="1.500" />
          </Svg>
        </BarButton>
        <Sep />
        <BarButton label="Mixar">
          <Svg w={38} h={10}>
            <path d="M0 0l19 5 19-5-2.500 9.500H1z" fill="#62dc3c" />
            <path d="M0 9.500h37" stroke="#3da022" />
          </Svg>
        </BarButton>
      </div>
    </div>
    <div className="flex items-center border-l border-white pr-3 pb-0.5 pl-0.5 [&>span]:h-[27px]">
      <Grip />
      <input
        type="range"
        aria-label="Volume geral"
        defaultValue={6}
        className={`ml-[11px] h-5 w-[84px] ${H_SLIDER} [&::-webkit-slider-thumb]:-mt-2 [&::-webkit-slider-thumb]:h-5 [&::-webkit-slider-thumb]:w-[11px] [&::-webkit-slider-thumb]:border [&::-webkit-slider-thumb]:border-t-white [&::-webkit-slider-thumb]:border-l-white [&::-webkit-slider-thumb]:border-r-[#5a534c] [&::-webkit-slider-thumb]:border-b-[#5a534c] [&::-webkit-slider-thumb]:bg-[#cac2b9] [&::-webkit-slider-thumb]:[clip-path:polygon(0_0,100%_0,100%_72%,50%_100%,0_72%)]`}
      />
    </div>
  </div>
);

const Carts = () => (
  <div className="flex h-[27px] shrink-0 items-center border-t border-b border-t-white border-b-[#857d75] pr-[10px] pl-0.5">
    <Grip />
    <div className="ml-[7px] flex flex-1">
      {Array.from({ length: 9 }, (_, i) => (
        <button key={i} type="button" className="flex w-[104px] items-center gap-1 text-[#857d75] [text-shadow:1px_1px_0_#fff]">
          <span className="flex h-4 w-4 items-center justify-center rounded-full bg-[#857b76] text-[13px] leading-4 text-white shadow-[1px_1px_0_#fff] [text-shadow:none]">
            {i + 1}
          </span>
          Vazio
        </button>
      ))}
    </div>
    <DropDown label="Banco de vinhetas" options={["1"]} className="w-[68px]" />
  </div>
);

const WindowButton = ({ label, d }: { label: string; d: string }) => (
  <button type="button" aria-label={label} className={`flex h-[14px] w-4 items-center justify-center ${RAISED}`}>
    <Svg w={10} h={10}>
      <path d={d} stroke="#000" strokeWidth="1.500" fill="none" />
    </Svg>
  </button>
);

export default function App() {
  return (
    <div className="flex h-screen flex-col overflow-hidden bg-[#cac2b9] font-[Roboto,sans-serif] text-[11px] leading-[14px] text-black">
      <header className="flex h-[18px] shrink-0 items-center justify-between bg-linear-to-r from-[#0a246a] to-[#8fb4ea] pr-0.5 pl-0.5">
        <div className="flex items-center gap-[2px]">
          <AppIcon />
          <h1 className="font-bold text-white">Sem Título1</h1>
        </div>
        <div className="flex">
          <WindowButton label="Minimizar" d="M1 8.500h5" />
          <WindowButton label="Restaurar" d="M3.500 4V1.500h5v4H7M1 4.500h5.500v4H1z" />
          <span className="w-0.5" />
          <WindowButton label="Fechar" d="M1.500 1.500l7 7M8.500 1.500l-7 7" />
        </div>
      </header>

      <nav className="flex h-[21px] shrink-0 items-center border-b border-[#a49c93] pl-0.5">
        <Grip />
        <div className="ml-[11px] flex gap-[15px] pt-0.5">
          {MENUS.map((m) => (
            <button key={m} type="button">{m}</button>
          ))}
        </div>
      </nav>

      <div className="flex h-6 shrink-0 items-stretch border-t border-white">
        <div className="flex flex-1 items-center border-r border-[#857d75] pl-0.5">
          <Grip />
          <div className="ml-[3px] flex items-center">
            <ToolButton label="Novo"><NewIcon /></ToolButton>
            <ToolButton label="Abrir"><OpenIcon /></ToolButton>
            <ToolButton label="Salvar"><SaveIcon /></ToolButton>
            <Sep />
            <ToolButton label="Adicionar"><PlusIcon /></ToolButton>
            <ToolButton label="Excluir"><DeleteIcon /></ToolButton>
            <ToolButton label="Copiar"><CopyIcon /></ToolButton>
            <ToolButton label="Colar"><PasteIcon /></ToolButton>
            <ToolButton label="Procurar"><SearchIcon /></ToolButton>
            <ToolButton label="Procurar na pasta"><SearchFolderIcon /></ToolButton>
            <Sep />
            <DropDown label="Modo de reprodução" options={["Normal"]} className="w-[99px]" />
            <Sep />
            <ToolButton label="Mixagem"><MixerIcon /></ToolButton>
            <ToolButton label="Microfone"><MicIcon /></ToolButton>
            <ToolButton label="Fade" pressed><FadeIcon /></ToolButton>
            <ToolButton label="Opções"><CheckDocIcon /></ToolButton>
            <Sep />
            <ToolButton label="Auxiliar 1" pressed><PlayNumIcon n={1} /></ToolButton>
            <ToolButton label="Auxiliar 2" pressed><PlayNumIcon n={2} /></ToolButton>
            <Sep />
            <ToolButton label="Ajuda"><HelpIcon /></ToolButton>
          </div>
        </div>
        <div className="flex w-4 items-center border-l border-r border-l-white border-r-[#857d75] pl-0.5">
          <Grip />
        </div>
        <div className="flex items-center border-l border-white pr-1 pl-0.5">
          <Grip />
          <div className="ml-1 flex h-[23px] w-[119px] items-center bg-linear-to-r from-[#1f9a1c] from-0% via-white via-20% to-white">
            <span className="ml-2.5 shrink-0">
              <Svg w={26} h={23}>
                <circle cx="13" cy="11.500" r="10.500" fill="#74b4e4" stroke="#3d7cb8" />
                <path d="M13 1a10 10 0 019 6l-7 3z" fill="#e0f4ff" />
                <path d="M13 22a10 10 0 01-9-6l7-3z" fill="#d0ecff" />
                <circle cx="13" cy="11.500" r="3" fill="#fff" stroke="#6aa0cc" />
                <path d="M2 11c0-6 4-8 7-9v3c3 2 2 5 0 6V8C7 7 5 8 4 12z" fill="#2aa024" />
                <path d="M13 16h4l-4 5h4.500M20 22v-5.500h2.500c2 0 2 2.500 0 2.500h-2l3 3" stroke="#8c6404" strokeWidth="2.200" fill="none" />
                <path d="M13 16h4l-4 5h4.500M20 22v-5.500h2.500c2 0 2 2.500 0 2.500h-2l3 3" stroke="#ffcf30" strokeWidth="1.300" fill="none" />
              </Svg>
            </span>
            <span className="ml-px border-b border-[#e8c020] font-['Liberation_Sans',sans-serif] text-[17px] leading-5">ZaraRadio</span>
          </div>
        </div>
      </div>

      <div className="flex min-h-0 flex-1">
        <main className="flex min-w-0 flex-1 flex-col border border-[#857d75] border-r-white border-b-white pr-1 pl-[10px]">
          <div className="flex h-[145px] shrink-0 gap-[6px] pt-[10px] pb-px">
            <OnAir />
            <Upcoming />
          </div>
          <div className="mt-px flex min-h-0 flex-1 pr-[5px] pb-2">
            <div className="flex w-[349px] shrink-0 flex-col">
              <Events />
              <FolderTree />
            </div>
            <MoveButtons />
            <section className="flex min-w-0 flex-1 flex-col">
              <div className="flex h-[30px] shrink-0 items-center justify-between">
                <h2 className="-ml-px pt-2">Duaração total: 01:17:10.2</h2>
                <div className="flex">
                  <ToolButton label="Relatório"><ReportIcon /></ToolButton>
                  <ToolButton label="Atualizar"><RefreshIcon /></ToolButton>
                </div>
              </div>
              <div className={`min-h-0 flex-1 overflow-hidden ${SUNKEN}`}>
                <TrackTable tracks={PLAYLIST} timeCol="w-[69px]" selected={0} next={1} />
              </div>
            </section>
          </div>
        </main>
        <aside className="ml-1 flex w-[204px] shrink-0 flex-col gap-[6px] py-px pr-0.5">
          <Auxiliary title="Auxiliar 1 - Sem Título4" tracks={AUX1} timeCol="w-[58px]" />
          <Auxiliary title="Auxiliar 2 - Sem Título3" tracks={AUX2} timeCol="w-[58px]" scroll />
        </aside>
      </div>

      <Transport />
      <Carts />

      <footer className="flex h-[18px] shrink-0 gap-[3px] leading-[17px]">
        <div className="flex-1 border-t border-r border-t-[#857d75] border-r-white" />
        <div className="w-[200px] border-t border-r border-l border-t-[#857d75] border-r-white border-l-[#857d75]" />
        <p className="w-[46px] border-t border-l border-[#857d75] pl-px">00:13.0</p>
      </footer>
    </div>
  );
}
